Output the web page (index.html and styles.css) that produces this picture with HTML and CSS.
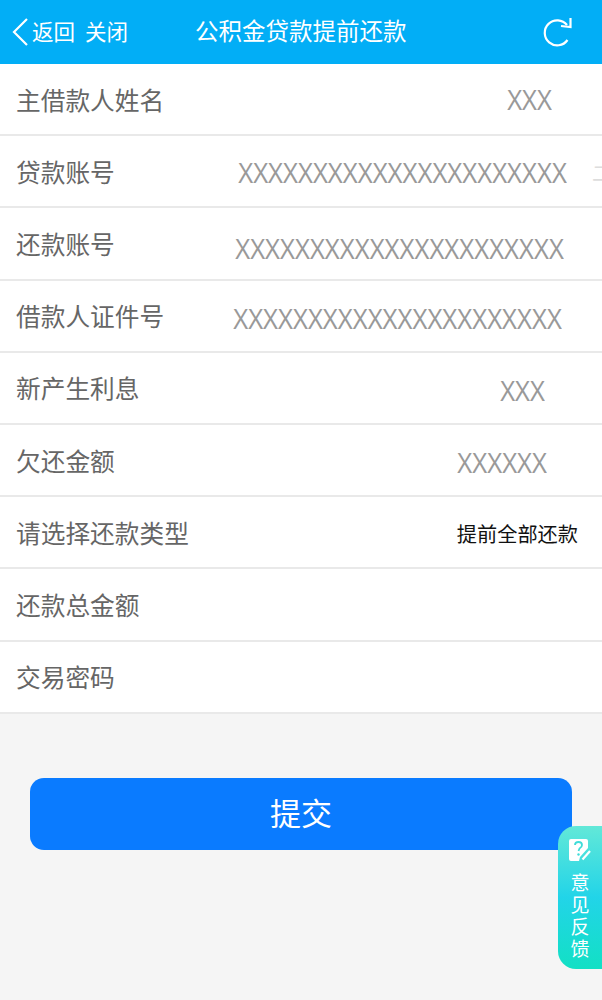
FILE: index.html
```html
<!DOCTYPE html>
<html lang="zh-CN">
<head>
    <meta charset="UTF-8">
    <meta name="viewport" content="width=device-width, initial-scale=1.0">
    <title>公积金贷款提前还款</title>
    <link rel="stylesheet" href="styles.css">
</head>
<body>
    <div class="page">
        <div class="header">
            <div class="header-left">
                <svg class="back-icon" width="18" height="28" viewBox="0 0 18 28">
                    <path d="M16 1 L3 14 L16 27" fill="none" stroke="#fff" stroke-width="2.2"/>
                </svg>
                <span class="back-text">返回</span>
                <span class="close-text">关闭</span>
            </div>
            <div class="header-title">公积金贷款提前还款</div>
            <svg class="refresh-icon" width="30" height="32" viewBox="0 0 30 32">
                <path d="M24.5 24 A12.5 12.5 0 1 1 24 9" fill="none" stroke="#fff" stroke-width="2.2"/>
                <path d="M27.5 2 L27.5 11 L18 10" fill="none" stroke="#fff" stroke-width="2.2"/>
            </svg>
        </div>

        <div class="form-list">
            <div class="form-row">
                <span class="row-label">主借款人姓名</span>
                <span class="row-value high end-50">XXX</span>
            </div>
            <div class="form-row">
                <span class="row-label">贷款账号</span>
                <span class="row-value end-35">XXXXXXXXXXXXXXXXXXXXXX</span>
                <span class="row-clip">二</span>
            </div>
            <div class="form-row">
                <span class="row-label">还款账号</span>
                <span class="row-value low end-38">XXXXXXXXXXXXXXXXXXXXXX</span>
            </div>
            <div class="form-row">
                <span class="row-label">借款人证件号</span>
                <span class="row-value mid end-40">XXXXXXXXXXXXXXXXXXXXXX</span>
            </div>
            <div class="form-row">
                <span class="row-label">新产生利息</span>
                <span class="row-value mid end-57">XXX</span>
            </div>
            <div class="form-row">
                <span class="row-label">欠还金额</span>
                <span class="row-value mid end-55">XXXXXX</span>
            </div>
            <div class="form-row">
                <span class="row-label">请选择还款类型</span>
                <span class="row-select">提前全部还款</span>
            </div>
            <div class="form-row">
                <span class="row-label">还款总金额</span>
            </div>
            <div class="form-row">
                <span class="row-label">交易密码</span>
            </div>
        </div>

        <div class="submit-wrap">
            <button class="submit-btn">提交</button>
        </div>

        <div class="feedback">
            <svg class="feedback-icon" width="22" height="24" viewBox="0 0 22 24">
                <path d="M2 1 H17 Q19 1 19 3 V10 L11 19 L10 23 H2 Q0 23 0 21 V3 Q0 1 2 1 Z" fill="#fff"/>
                <path d="M6 7 Q6 4 9.500 4 Q13 4 13 7 Q13 9 10.500 10.500 L9.500 13" fill="none" stroke="#3fdcd8" stroke-width="1.800"/>
                <circle cx="9.500" cy="16.500" r="1.200" fill="#3fdcd8"/>
                <path d="M13.500 21.500 L21 13" fill="none" stroke="#fff" stroke-width="2.200"/>
            </svg>
            <span class="feedback-text">意见反馈</span>
        </div>
    </div>
</body>
</html>
```

FILE: styles.css
```css
body {
    margin: 0;
    font-family: "Noto Sans CJK SC", "Noto Sans", sans-serif;
    background: #f5f5f5;
}

.page {
    position: relative;
    height: 1000px;
    overflow: hidden;
}

.header {
    display: flex;
    align-items: center;
    height: 64px;
    background: #02aef6;
    color: white;
}

.header-left {
    display: flex;
    align-items: center;
    width: 195px;
    padding-left: 11px;
    box-sizing: border-box;
    font-size: 21.5px;
    margin-top: -3px;
}

.back-icon {
    margin-right: 3px;
    margin-top: 2px;
}

.close-text {
    margin-left: 10px;
}

.header-title {
    font-size: 23.5px;
    width: 212px;
    white-space: nowrap;
    margin-top: -5px;
}

.refresh-icon {
    margin-left: auto;
    margin-right: 29px;
    margin-top: -1px;
}

.form-list {
    background: white;
}

.form-row {
    display: flex;
    align-items: center;
    justify-content: space-between;
    position: relative;
    height: 70.2px;
    padding-left: 16px;
    border-bottom: 2px solid #e9e9e9;
    white-space: nowrap;
}

.row-label {
    font-size: 24.7px;
    color: #666;
    margin-top: -1px;
}

.row-value {
    font-family: "Open Sans", sans-serif;
    font-size: 27.7px;
    color: #999;
    margin-top: 2px;
    transform: scaleX(0.934);
    transform-origin: right center;
}

.row-value.high { margin-top: 0; }
.row-value.mid { margin-top: 4px; }
.row-value.low { margin-top: 10px; }

.end-35 { margin-right: 35px; }
.end-38 { margin-right: 38px; }
.end-40 { margin-right: 40px; }
.end-50 { margin-right: 50px; }
.end-55 { margin-right: 55px; }
.end-57 { margin-right: 57px; }

.row-select {
    font-size: 20.2px;
    color: #111;
    margin-right: 24px;
    margin-top: 2px;
}

.row-clip {
    position: absolute;
    right: -10px;
    top: 22px;
    font-size: 20px;
    color: #ddd;
}

.submit-wrap {
    padding: 64px 30px 0;
}

.submit-btn {
    display: block;
    width: 100%;
    height: 72px;
    padding-bottom: 6px;
    border: none;
    border-radius: 14px;
    background: #0a7bff;
    color: white;
    font-family: inherit;
    font-size: 31px;
}

.feedback {
    position: absolute;
    right: 0;
    top: 826px;
    width: 44px;
    height: 143px;
    box-sizing: border-box;
    padding-top: 12px;
    display: flex;
    flex-direction: column;
    align-items: center;
    background: linear-gradient(180deg, #62e8d8 0%, #22d4e8 50%, #12e0c4 100%);
    border-radius: 18px 0 0 18px;
    color: white;
}

.feedback-icon {
    margin-bottom: 11px;
}

.feedback-text {
    writing-mode: vertical-rl;
    font-size: 19px;
    letter-spacing: 3px;
}
```
